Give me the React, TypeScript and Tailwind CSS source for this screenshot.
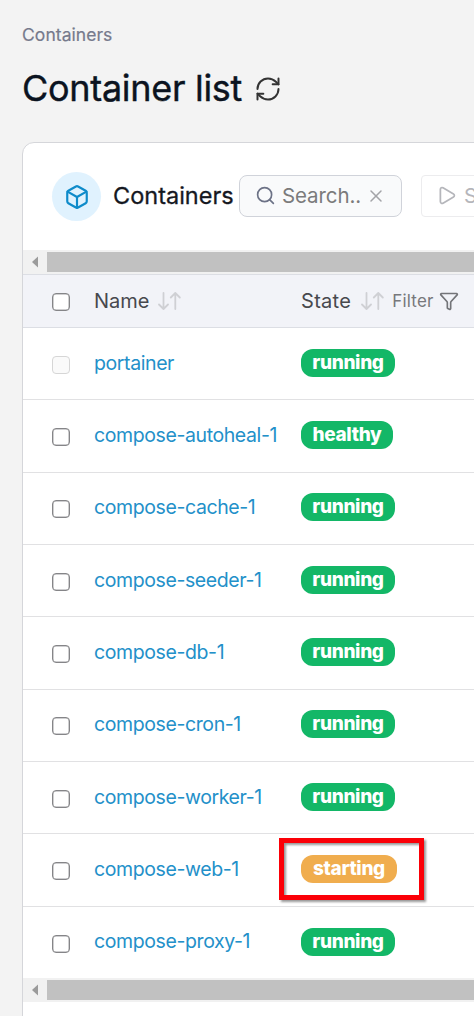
import type { ReactNode } from 'react';
import { Box, Filter, Play, RefreshCw, Search, X } from 'lucide-react';

const containers = [
  { name: 'portainer', state: 'running', locked: true },
  { name: 'compose-autoheal-1', state: 'healthy' },
  { name: 'compose-cache-1', state: 'running' },
  { name: 'compose-seeder-1', state: 'running' },
  { name: 'compose-db-1', state: 'running' },
  { name: 'compose-cron-1', state: 'running' },
  { name: 'compose-worker-1', state: 'running' },
  { name: 'compose-web-1', state: 'starting' },
  { name: 'compose-proxy-1', state: 'running' },
];

const badgeStyles: Record<string, string> = {
  running: 'bg-[#13b767] w-[94px]',
  healthy: 'bg-[#13b767] w-[92px]',
  starting: 'bg-[#f0ad4e] w-[96px]',
};

function Checkbox({ disabled }: { disabled?: boolean }) {
  return (
    <input
      type="checkbox"
      disabled={disabled}
      className="mt-[2px] block size-[18px] appearance-none rounded-[4px] border-[1.5px] border-[#858588] bg-white shadow-[inset_0_0_0_0.5px_#a0a0a3] disabled:border-[#d6d6d6] disabled:bg-[#fafafa] disabled:shadow-none"
    />
  );
}

function SortIcon() {
  return (
    <svg
      width="23"
      height="18"
      viewBox="0 0 23 18"
      fill="none"
      stroke="#cfd0d4"
      strokeWidth="1.8"
      strokeLinecap="round"
      strokeLinejoin="round"
    >
      <path d="M5.5 1v16M1 12.5 5.5 17l4.5-4.5" />
      <path d="M17.3 17V1M12.8 5.5 17.3 1l4.5 4.5" />
    </svg>
  );
}

function ScrollBar() {
  return (
    <div className="flex h-6 items-center bg-[#f1f1f1]">
      <div className="flex w-6 justify-center">
        <svg width="6" height="12" viewBox="0 0 6 12" fill="#9b9b9b">
          <path d="M6 0.5v11L0 6z" />
        </svg>
      </div>
      <div className="h-5 flex-1 bg-[#c1c1c1]" />
    </div>
  );
}

function Row({ children, className }: { children: ReactNode; className: string }) {
  return (
    <div className={`grid grid-cols-[42px_207px_1fr] items-center pl-[29px] ${className}`}>
      {children}
    </div>
  );
}

export default function App() {
  return (
    <div className="h-[1016px] w-[474px] overflow-hidden bg-[#f3f3f3] pl-[22px] font-[Inter,sans-serif]">
      {/* Page header */}
      <div className="h-[142px] pt-[23px]">
        <div className="text-[17.5px] leading-6 tracking-[0.05px] text-[#767a8c] [-webkit-text-stroke:0.2px_#767a8c]">
          Containers
        </div>
        <div className="mt-[17px] flex items-center gap-[12px]">
          <h1 className="whitespace-nowrap text-[36px] leading-[48px] tracking-[-0.3px] text-[#0b1320] [-webkit-text-stroke:0.4px_#0b1320]">
            Container list
          </h1>
          <RefreshCw className="mt-[2px] size-[28px] text-[#333]" strokeWidth={1.7} />
        </div>
      </div>

      <div className="h-[900px] w-[900px] rounded-tl-xl border border-[#d5d6da] bg-white">
        {/* Toolbar */}
        <div className="flex h-[107px] items-center pl-[29px]">
          <div className="flex size-[49px] items-center justify-center rounded-full bg-[#e0f2fe]">
            <Box className="size-[26px] text-[#0e8bca]" strokeWidth={2} />
          </div>
          <h2 className="mb-[2px] ml-3 w-[126px] whitespace-nowrap text-[23.5px] leading-8 text-[#15181f] [-webkit-text-stroke:0.3px_#15181f]">
            Containers
          </h2>
          <div className="mb-[2px] flex h-[42px] w-[163px] items-center rounded-lg border border-[#d0d3da] bg-[#f9fafb] pl-[15px]">
            <Search className="size-[21px] text-[#6c7286]" strokeWidth={1.9} />
            <span className="ml-[6px] mt-[2px] w-[84px] text-[20.5px] tracking-[-0.1px] text-[#7b7b7b]">Search..</span>
            <X className="size-5 text-[#a3a4a8]" strokeWidth={1.8} />
          </div>
          <div className="mb-[2px] ml-[19px] flex h-[42px] w-[110px] items-center rounded-l border border-[#ececee] pl-[14px] text-[#b5b6bb]">
            <Play className="size-[21px]" strokeWidth={2} />
            <span className="ml-[7px] mt-[2px] text-[20.5px]">Start</span>
          </div>
        </div>

        <ScrollBar />

        {/* Table */}
        <Row className="h-[54px] border-y border-[#dcdee4] bg-[#f2f3f8] text-[20px] text-[#47484d]">
          <Checkbox />
          <div className="flex items-center gap-[9px]">
            Name
            <SortIcon />
          </div>
          <div className="flex items-center">
            <span className="mr-[10px] tracking-[0.3px]">State</span>
            <SortIcon />
            <span className="ml-[8px] mr-[5px] mt-[2px] text-[17px] tracking-[0.2px] text-[#77787c]">Filter</span>
            <Filter className="size-[20px] text-[#737478]" strokeWidth={2} />
          </div>
        </Row>
        {containers.map((c, i) => (
          <Row
            key={c.name}
            className={i === containers.length - 1 ? 'h-[71.5px]' : 'h-[72.35px] border-b border-[#e1e1e3]'}
          >
            <Checkbox disabled={c.locked} />
            <a className="mb-px whitespace-nowrap text-[19.5px] tracking-[-0.4px] text-[#2390c9]">{c.name}</a>
            <div className="relative mb-[2px]">
              <span
                className={`flex h-[28px] items-center justify-center rounded-[12px] pt-px text-[19px] leading-[26px] font-extrabold tracking-[-0.35px] text-white ${badgeStyles[c.state]}`}
              >
                <span className="-mt-[1px]">{c.state}</span>
              </span>
              {c.state === 'starting' && (
                <div className="absolute -left-[22px] -top-[17px] h-[62px] w-[145px] border-[5px] border-[#fb0007] drop-shadow-[2px_2px_1px_rgba(0,0,0,0.4)]" />
              )}
            </div>
          </Row>
        ))}

        <ScrollBar />
      </div>
    </div>
  );
}
